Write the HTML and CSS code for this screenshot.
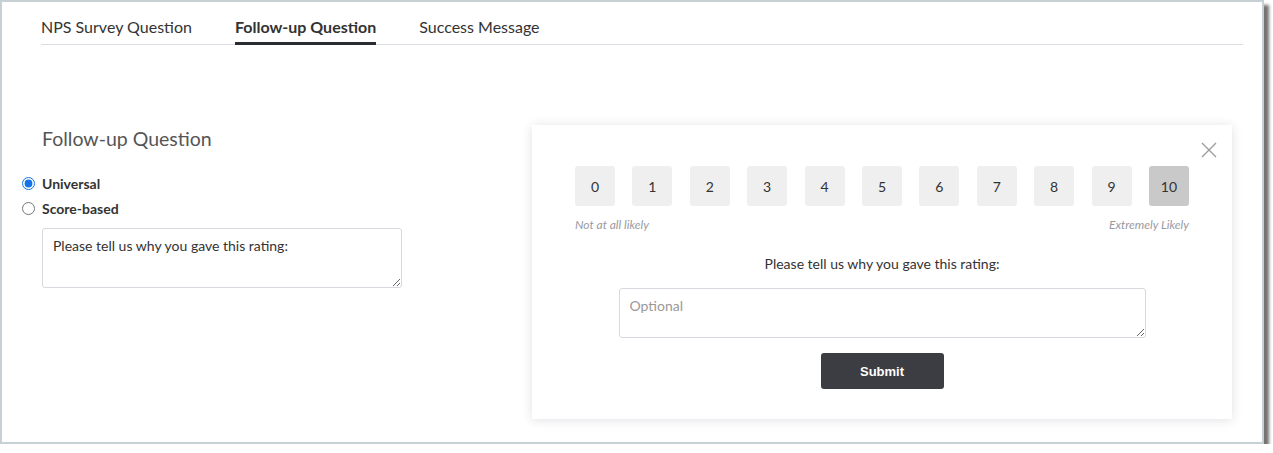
FILE: index.html
```html
<!DOCTYPE html>
<html lang="en">
<head>
    <meta charset="UTF-8">
    <meta name="viewport" content="width=device-width, initial-scale=1.0">
    <title>NPS Survey - Follow-up Question</title>
    <link rel="stylesheet" href="styles.css">
</head>
<body>
    <div class="frame">
        <ul class="tabs">
            <li class="tab">NPS Survey Question</li>
            <li class="tab active">Follow-up Question</li>
            <li class="tab">Success Message</li>
        </ul>

        <div class="main">
            <div class="settings">
                <h2>Follow-up Question</h2>
                <label class="option">
                    <input type="radio" name="mode" checked>
                    <span>Universal</span>
                </label>
                <label class="option">
                    <input type="radio" name="mode">
                    <span>Score-based</span>
                </label>
                <textarea class="question-input">Please tell us why you gave this rating:</textarea>
            </div>

            <div class="preview">
                <button class="close" aria-label="Close">
                    <svg width="16" height="16" viewBox="0 0 16 16">
                        <path d="M1 1 L15 15 M15 1 L1 15" stroke="#9b9b9b" stroke-width="1.3" fill="none"/>
                    </svg>
                </button>
                <div class="scores">
                    <div class="score">0</div>
                    <div class="score">1</div>
                    <div class="score">2</div>
                    <div class="score">3</div>
                    <div class="score">4</div>
                    <div class="score">5</div>
                    <div class="score">6</div>
                    <div class="score">7</div>
                    <div class="score">8</div>
                    <div class="score">9</div>
                    <div class="score selected">10</div>
                </div>
                <div class="scale-labels">
                    <span>Not at all likely</span>
                    <span>Extremely Likely</span>
                </div>
                <p class="prompt">Please tell us why you gave this rating:</p>
                <textarea class="answer" placeholder="Optional"></textarea>
                <button class="submit">Submit</button>
            </div>
        </div>
    </div>
</body>
</html>
```

FILE: styles.css
```css
body {
    margin: 0;
    font-family: 'Lato', sans-serif;
    color: #333;
    background: #fff;
}
.frame {
    width: 1260px;
    height: 440px;
    border: 2px solid #c7d1d5;
    background: #fff;
    box-shadow: 5px 5px 3px rgba(0, 0, 0, 0.55);
}
.tabs {
    display: flex;
    gap: 43px;
    list-style: none;
    margin: 0 19px 0 39px;
    padding: 15px 0 0;
    border-bottom: 1px solid #dcdce3;
}
.tab {
    font-size: 16px;
    line-height: 20px;
    padding-bottom: 5px;
    border-bottom: 3px solid transparent;
    margin-bottom: -1px;
    color: #333;
}
.tab.active {
    font-weight: bold;
    border-bottom-color: #2a2c33;
}
.main {
    display: flex;
    margin-top: 80px;
    padding-left: 20px;
}
.settings {
    width: 510px;
    padding-top: 2px;
}
.settings h2 {
    margin: 0 0 22px 20px;
    font-size: 19.5px;
    line-height: 24px;
    font-weight: 400;
    color: #555;
}
.option {
    display: flex;
    align-items: center;
    gap: 7px;
    height: 20px;
    margin-bottom: 5px;
    font-size: 14px;
    font-weight: bold;
    color: #333;
}
.option input {
    margin: 0;
    width: 13px;
    height: 13px;
    accent-color: #1473e6;
}
.question-input {
    display: block;
    box-sizing: border-box;
    width: 360px;
    height: 60px;
    margin: 10px 0 0 20px;
    padding: 9px 10px;
    border: 1px solid #d8d8de;
    border-radius: 3px;
    font-family: 'Lato', sans-serif;
    font-size: 14px;
    line-height: 16px;
    color: #333;
}
.preview {
    position: relative;
    width: 700px;
    box-sizing: border-box;
    padding: 41px 43px 30px;
    background: #fff;
    box-shadow: 0 1px 10px rgba(40, 40, 70, 0.14);
    display: flex;
    flex-direction: column;
    align-items: center;
}
.close {
    position: absolute;
    top: 17px;
    right: 15px;
    padding: 0;
    border: none;
    background: none;
    width: 16px;
    height: 16px;
}
.scores {
    display: flex;
    justify-content: space-between;
    width: 100%;
}
.score {
    width: 40px;
    height: 40px;
    display: flex;
    align-items: center;
    justify-content: center;
    background: #efefef;
    border-radius: 3px;
    font-size: 14px;
    color: #333;
}
.score.selected {
    background: #c9c9c9;
}
.scale-labels {
    display: flex;
    justify-content: space-between;
    width: 100%;
    margin-top: 12px;
    font-size: 12px;
    line-height: 14px;
    font-style: italic;
    color: #9a9aa2;
}
.prompt {
    margin: 23px 0 0;
    font-size: 14px;
    line-height: 18px;
    color: #333;
}
.answer {
    display: block;
    box-sizing: border-box;
    width: 527px;
    height: 50px;
    margin-top: 15px;
    padding: 8px 10px;
    border: 1px solid #d8d8de;
    border-radius: 3px;
    font-family: 'Lato', sans-serif;
    font-size: 14px;
}
.answer::placeholder {
    color: #999;
}
.submit {
    margin-top: 15px;
    width: 123px;
    height: 36px;
    border: none;
    border-radius: 3px;
    background: #3b3d42;
    color: #fff;
    font-family: 'Liberation Sans', Arial, sans-serif;
    font-weight: bold;
    font-size: 13px;
}
```
